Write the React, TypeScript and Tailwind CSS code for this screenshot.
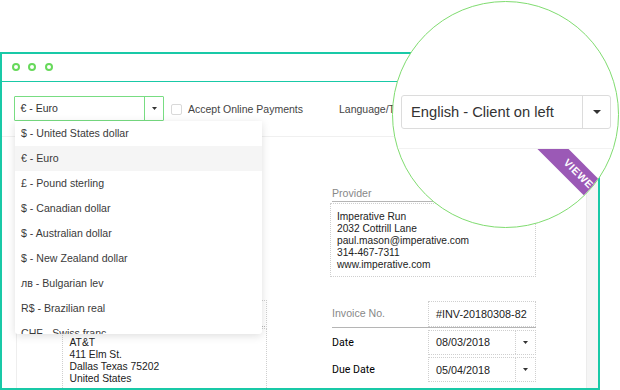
import React from "react";

const Caret = ({ w = 6, h = 3 }: { w?: number; h?: number }) => (
  <svg width={w} height={h} viewBox={`0 0 ${w} ${h}`}>
    <path d={`M0 0H${w}L${w / 2} ${h}Z`} fill="#333" />
  </svg>
);

const currencies = [
  "$ - United States dollar",
  "€ - Euro",
  "£ - Pound sterling",
  "$ - Canadian dollar",
  "$ - Australian dollar",
  "$ - New Zealand dollar",
  "лв - Bulgarian lev",
  "R$ - Brazilian real",
  "CHF - Swiss franc",
];

export default function App() {
  return (
    <div className="relative w-[620px] h-[390px] overflow-hidden bg-white font-['Liberation_Sans',Arial,sans-serif] text-[#333]">
      <div className="pt-[52px]">
        <div className="w-[600px] h-[337.5px] border-[2.5px] border-[#19c9a7] flex flex-col overflow-hidden">
          {/* title bar */}
          <div className="h-[27.5px] shrink-0 border-b-[1.5px] border-[#19c9a7] flex items-center pl-[9.5px] gap-[8.7px]">
            <span className="w-[8px] h-[8px] rounded-full border-2 border-[#67d95b]" />
            <span className="w-[8px] h-[8px] rounded-full border-2 border-[#67d95b]" />
            <span className="w-[8px] h-[8px] rounded-full border-2 border-[#67d95b]" />
          </div>

          {/* toolbar */}
          <div className="h-[55px] shrink-0 border-b border-[#f0f0f0] flex items-start pt-[14.5px] pl-[12px] text-[10.5px] text-[#444]">
            <div className="relative w-[150px] h-[25px] flex border-[1.5px] border-[#78dd82] rounded-[1px]">
              <div className="flex-1 flex items-center pl-[5.5px] pt-[1px] text-[#333]">€ - Euro</div>
              <div className="w-[19px] border-l-[1.5px] border-[#78dd82] flex items-center justify-center">
                <Caret w={5} h={3} />
              </div>
              <div className="absolute left-0 top-[24px] w-[247px] h-[213px] bg-white rounded-b-[3px] shadow-[0_2px_8px_rgba(0,0,0,0.13)] overflow-hidden z-10">
                {currencies.map((c, i) => (
                  <div
                    key={c}
                    className={`h-[25px] flex items-center pl-[6px] pt-[1px] text-[10.6px] text-[#3a3a3a] ${i === 1 ? "bg-[#f5f5f5]" : ""}`}
                  >
                    {c}
                  </div>
                ))}
              </div>
            </div>
            <span className="mt-[7.5px] ml-[7px] w-[11px] h-[11px] border border-[#d9d9d9] rounded-[2px]" />
            <span className="ml-[6px] leading-[26px]">Accept Online Payments</span>
            <span className="ml-[36px] leading-[26px] whitespace-nowrap">Language/Template</span>
          </div>

          {/* document */}
          <div className="flex-1 flex min-h-0">
            <div className="w-[13.5px] shrink-0" />
            <div className="flex-1 border-l border-[#eeeeee] flex pl-[45.5px] gap-[63px]">
              {/* left column: client */}
              <div className="w-[205px] pt-[163px] shrink-0">
                <div className="h-[27px] border border-dotted border-[#cfcfcf] border-b-[1.5px] border-b-solid border-b-[#b5b5b5] pl-[8px] text-[10.6px] text-[#888] leading-[25px]">
                  Client
                </div>
                <div className="mt-[1.5px] border border-dotted border-[#cfcfcf] px-[6.5px] pt-[7.5px] pb-[5px] text-[10.3px] leading-[12.3px] text-[#222]">
                  <div>AT&amp;T</div>
                  <div>411 Elm St.</div>
                  <div>Dallas Texas 75202</div>
                  <div>United States</div>
                </div>
              </div>

              {/* right column: provider */}
              <div className="w-[206px] pt-[49.5px] shrink-0">
                <div className="ml-[2px] text-[10.6px] leading-[15px] text-[#888] border-b-[1.5px] border-[#b5b5b5]">
                  Provider
                </div>
                <div className="mt-[0.5px] border border-dotted border-[#cfcfcf] px-[6px] pt-[7px] pb-[4px] text-[10.2px] leading-[12.2px] text-[#222]">
                  <div>Imperative Run</div>
                  <div>2032 Cottrill Lane</div>
                  <div>paul.mason@imperative.com</div>
                  <div>314-467-7311</div>
                  <div>www.imperative.com</div>
                </div>

                <div className="mt-[24px] ml-[2px] flex items-center justify-between border-b-[1.5px] border-[#b5b5b5]">
                  <span className="text-[10.6px] text-[#888] pt-[1px]">Invoice No.</span>
                  <div className="w-[108px] h-[26px] border border-dotted border-[#cfcfcf] flex items-center pl-[7px] pt-[1px] text-[10.8px] text-[#222]">
                    #INV-20180308-82
                  </div>
                </div>

                <div className="mt-[2px] ml-[2px] flex items-center">
                  <span className="flex-1 text-[10.6px] text-[#000] font-['Roboto',Arial,sans-serif] pt-[1px]">Date</span>
                  <div className="w-[108px] h-[25px] border border-dotted border-[#cfcfcf] flex">
                    <div className="flex-1 flex items-center pl-[7px] pt-[1px] text-[10.8px] text-[#222]">08/03/2018</div>
                    <div className="w-[20px] border-l border-dotted border-[#cfcfcf] flex items-center justify-center">
                      <Caret w={5} h={3} />
                    </div>
                  </div>
                </div>

                <div className="mt-[2.5px] ml-[2px] flex items-center">
                  <span className="flex-1 text-[10.6px] text-[#000] font-['Roboto',Arial,sans-serif] pt-[1px]">Due Date</span>
                  <div className="w-[108px] h-[25px] border border-dotted border-[#cfcfcf] flex">
                    <div className="flex-1 flex items-center pl-[7px] pt-[1px] text-[10.8px] text-[#222]">05/04/2018</div>
                    <div className="w-[20px] border-l border-dotted border-[#cfcfcf] flex items-center justify-center">
                      <Caret w={5} h={3} />
                    </div>
                  </div>
                </div>
              </div>
            </div>
            <div className="w-[12px] shrink-0 bg-[#f5f5f5] border-l border-[#ececec]" />
          </div>
        </div>
      </div>

      {/* magnifier lens */}
      <div className="absolute left-[392px] top-[1px] w-[227px] h-[227px] rounded-full border border-[#80dc70] bg-white overflow-hidden z-20">
        <div className="pt-[93px] pl-[8px]">
          <div className="w-[210px] h-[34px] border border-[#dcdcdc] rounded-[3px] flex">
            <div className="flex-1 flex items-center pl-[9px] pt-[1px] text-[14.7px] text-[#333] whitespace-nowrap">
              English - Client on left
            </div>
            <div className="w-[28px] border-l border-[#dcdcdc] flex items-center justify-center">
              <Caret w={8} h={4} />
            </div>
          </div>
        </div>
        <div className="mt-[19px] h-px bg-[#f2f2f2]" />
        <div className="absolute left-[87px] top-[147px] w-[200px] h-[100px] overflow-hidden">
          <div className="absolute left-[20.5px] top-[17px] w-[160px] h-[22px] rotate-45 bg-[#9b59b6] text-white text-[10.5px] font-bold tracking-[0.6px] flex items-center justify-center">
            VIEWED
          </div>
        </div>
      </div>
    </div>
  );
}
